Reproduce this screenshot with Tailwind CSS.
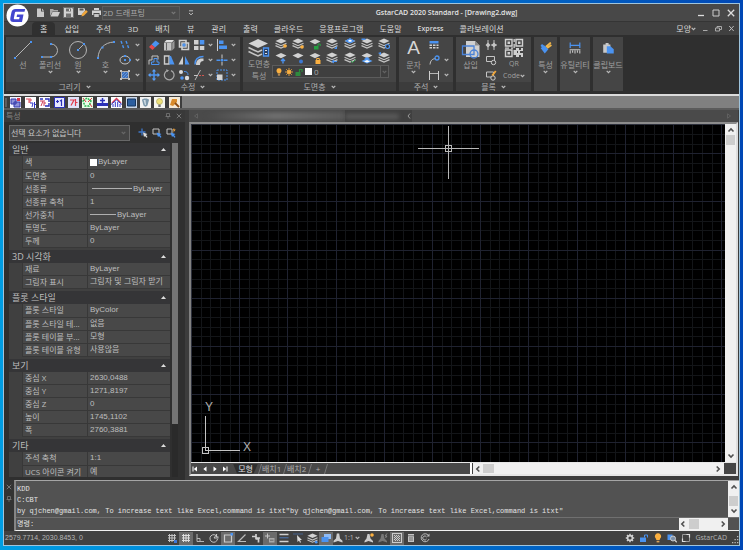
<!DOCTYPE html>
<html lang="ko">

<head>
    <meta charset="UTF-8">
    <meta name="viewport" content="width=device-width, initial-scale=1.0">
    <title>GstarCAD 2020 Standard - [Drawing2.dwg]</title>
    <script src="https://cdn.jsdelivr.net/npm/@tailwindcss/browser@4"></script>
</head>

<body class="h-screen overflow-hidden bg-linear-to-r from-[#009de3] via-[#0078d0] to-[#0047b5] pt-[3px] pr-[3px] pb-1 pl-[3px] font-['Open_Sans','Noto_Sans_CJK_KR',sans-serif] text-[8px] leading-[10px] text-[#c4c4c4]">

    <!-- shared symbols -->
    <svg class="hidden">
        <symbol id="caret" viewBox="0 0 5 4"><path d="M.7.8 2.5 2.6 4.3.8" fill="none" stroke="#bbb" stroke-width="1.2" /></symbol>
        <symbol id="layers" viewBox="0 0 12 12">
            <path d="M6 .5 11.5 3 6 5.5.5 3z" fill="#d2d2d2" />
            <path d="M.5 5.2 6 7.7l5.5-2.5M.5 7.6 6 10.1l5.5-2.5" fill="none" stroke="#c4c4c4" stroke-width="1.2" />
        </symbol>
        <symbol id="layer" viewBox="0 0 12 12">
            <path d="M6 1 11.5 3.6 6 6.2.5 3.6z" fill="#d2d2d2" />
        </symbol>
        <symbol id="up" viewBox="0 0 8 8"><path d="M1.5 5.5 4 3l2.5 2.5" fill="none" stroke="#505050" stroke-width="1.6" /></symbol>
        <symbol id="down" viewBox="0 0 8 8"><path d="M1.5 2.5 4 5l2.5-2.5" fill="none" stroke="#505050" stroke-width="1.6" /></symbol>
        <symbol id="left" viewBox="0 0 8 8"><path d="M5.3 1.5 2.8 4l2.5 2.5" fill="none" stroke="#505050" stroke-width="1.6" /></symbol>
        <symbol id="right" viewBox="0 0 8 8"><path d="M2.7 1.5 5.2 4 2.7 6.5" fill="none" stroke="#505050" stroke-width="1.6" /></symbol>
        <symbol id="bulb" viewBox="0 0 10 10"><path d="M5 .3a3 3 0 0 1 2.2 5.2L6.6 7H3.4L2.8 5.5A3 3 0 0 1 5 .3z" fill="#fbb040" /><path d="M3.6 7.8h2.8v1.6H3.6z" fill="#d9a35a" /></symbol>
    </svg>

    <div class="relative flex h-full flex-col border border-[#9fc4dc] bg-[#3a3a3a]">

        <button aria-label="GstarCAD" class="absolute top-0 left-[2px] z-10 size-[23px]">
            <svg viewBox="0 0 23 23" class="size-[23px]">
                <circle cx="11.5" cy="11.5" r="11" fill="#fff" />
                <path d="M19.2 5H9.8C6.8 5 6 6.200 5.400 8.500L4.400 13.500C3.800 16.500 4.700 18 7.500 18H16l1.500-7.500h-6.400l-.5 2.400h3l-.5 2.300H8.700c-.8 0-1-.4-.8-1.300l.9-4.700c.2-1 .6-1.400 1.500-1.400h8.200z" fill="#4246cf" />
            </svg>
        </button>

        <!-- title bar -->
        <header class="flex h-[17px] shrink-0 items-center bg-[#484848] pr-1 pl-[31px]">
            <div class="flex items-center gap-[3px]">
                <button aria-label="새로 만들기"><svg viewBox="0 0 11 11" class="size-[11px]"><path d="M2 1.500h4v3h3V10H2zM7 1.500 9 3.800H7z" fill="#c9c9c9" /></svg></button>
                <button aria-label="열기"><svg viewBox="0 0 11 11" class="size-[11px]"><path d="M1 9V2h3l1 1h4v1.500H3.500z" fill="#aaa" /><path d="M3.500 5H11L9 9.500H1.500z" fill="#cdcdcd" /></svg></button>
                <button aria-label="저장" class="bg-[#6e6e6e]"><svg viewBox="0 0 11 11" class="size-[11px]"><path d="M1 1h8l1 1v8H1z" fill="#d2d2d2" /><path d="M3 1.500h5v3H3zM3 6.500h5V10H3z" fill="#707070" /><path d="M6 2h1v2H6z" fill="#ddd" /></svg></button>
                <button aria-label="다른 이름으로 저장"><svg viewBox="0 0 11 11" class="size-[11px]"><path d="M1 1h6l1 1v2L4.500 8H1z" fill="#d2d2d2" /><path d="M2.500 1.500h4v2h-4z" fill="#555" /><path d="m5 7 4-4 1.800 1.800-4 4L4.500 9.500z" fill="#f0a63a" /></svg></button>
                <button aria-label="인쇄"><svg viewBox="0 0 11 11" class="size-[11px]"><path d="M3 1h5v2H3zM1 3.500h9V8H8.500V6h-6v2H1z" fill="#d2d2d2" /><path d="M3.200 7h4.600v3H3.200z" fill="#c4c4c4" /></svg></button>
            </div>
            <div class="relative flex">
                <select aria-label="작업 공간" class="h-[14px] w-[78px] appearance-none border border-[#5c5c5c] bg-[#4b4b4b] text-[8px] leading-[12px] text-[#a8a8a8]">
                    <option>2D 드래프팅</option>
                </select>
                <svg viewBox="0 0 5 4" class="pointer-events-none absolute top-[5px] right-1 h-1 w-[5px] opacity-40"><use href="#caret" /></svg>
            </div>
            <button aria-label="빠른 실행 사용자화" class="ml-2"><svg viewBox="0 0 6 6" class="size-[6px]"><path d="M1 .8h4M1 3l2 1.800L5 3" fill="none" stroke="#bbb" /></svg></button>
            <h1 class="flex-1 pl-[76px] text-center text-[7px] font-semibold text-[#e4e4e4]">GstarCAD 2020 Standard - [Drawing2.dwg]</h1>
            <div class="flex w-[112px] justify-end gap-[7px]">
                <button aria-label="최소화"><svg viewBox="0 0 8 8" class="size-2"><path d="M1 6.500h6" stroke="#ddd" stroke-width="1.300" /></svg></button>
                <button aria-label="최대화"><svg viewBox="0 0 8 8" class="size-2"><path d="M1 1h6v6H1z" fill="none" stroke="#ccc" /></svg></button>
                <button aria-label="닫기"><svg viewBox="0 0 8 8" class="size-2"><path d="m.8.8 6.400 6.400m0-6.400L.8 7.200" stroke="#ddd" stroke-width="1.300" /></svg></button>
            </div>
        </header>

        <!-- ribbon tabs -->
        <nav class="flex h-[14px] shrink-0 items-stretch border-t border-[#353535] bg-[#404040] pr-1 pl-7 leading-[13px] text-[#dadada]">
            <div class="flex gap-px">
                <a href="#" class="rounded-t-sm bg-[#303030] px-2">홈</a>
                <a href="#" class="px-2">삽입</a>
                <a href="#" class="px-2">주석</a>
                <a href="#" class="px-2">3D</a>
                <a href="#" class="px-2">배치</a>
                <a href="#" class="px-2">뷰</a>
                <a href="#" class="px-2">관리</a>
                <a href="#" class="px-2">출력</a>
            </div>
            <a href="#" class="px-2">클라우드</a>
            <a href="#" class="px-2">응용프로그램</a>
            <a href="#" class="px-2">도움말</a>
            <a href="#" class="px-2 text-[7px] font-semibold">Express</a>
            <a href="#" class="px-2">콜라보레이션</a>
            <div class="ml-auto flex items-center gap-[6px]">
                <button class="flex items-center">모양<svg class="h-1 w-[5px]"><use href="#caret" /></svg></button>
                <button aria-label="도면 최소화"><svg viewBox="0 0 7 7" class="size-[7px]"><path d="M1 5.500h4.500" stroke="#aaa" /></svg></button>
                <button aria-label="도면 복원"><svg viewBox="0 0 7 7" class="size-[7px]"><path d="M.5 3h4v3h-4zM2 3V1.500h4.500v3h-2" fill="none" stroke="#aaa" /></svg></button>
                <button aria-label="도면 닫기"><svg viewBox="0 0 7 7" class="size-[7px]"><path d="m1.200 1 4.500 5m0-5-4.500 5" stroke="#bbb" /></svg></button>
            </div>
        </nav>

        <!-- ribbon -->
        <section class="flex h-[59px] shrink-0 gap-[3px] bg-[#2f2f2f] px-[2px] pt-[2px] pb-[3px] text-[#a0a0a0]">

            <div class="flex w-[137px] flex-col bg-[#454545]">
                <div class="flex flex-1 pl-1">
                    <button class="flex w-[26px] flex-col items-center pt-[3px]">
                        <svg viewBox="0 0 20 20" class="size-5"><path d="M2 18 18 2" stroke="#b5b5b5" /><path d="M1 17h2v2H1zM17 1h2v2h-2z" fill="#4b93f0" /></svg>선</button>
                    <button class="flex w-7 flex-col items-center pt-[3px]">
                        <svg viewBox="0 0 20 20" class="size-5"><path d="M2 17h9a6.500 6.500 0 0 0 0-13" fill="none" stroke="#b5b5b5" /><path d="M1 16h2v2H1zM10 16h2v2h-2zM10 3h2v2h-2z" fill="#4b93f0" /></svg>폴리선<svg class="h-1 w-[5px]"><use href="#caret" /></svg></button>
                    <button class="flex w-7 flex-col items-center pt-[3px]">
                        <svg viewBox="0 0 20 20" class="size-5"><circle cx="10" cy="10" r="8.500" fill="none" stroke="#b5b5b5" /><path d="m10 10 6-6" stroke="#b5b5b5" /><path d="M9 9h2v2H9zM15 3h2v2h-2z" fill="#4b93f0" /></svg>원<svg class="h-1 w-[5px]"><use href="#caret" /></svg></button>
                    <button class="flex w-[27px] flex-col items-center pt-[3px]">
                        <svg viewBox="0 0 20 20" class="size-5"><path d="M2 18C2.500 9 8 2.500 18 2" fill="none" stroke="#b5b5b5" /><path d="M1 17h2v2H1zM5.500 6.500h2v2h-2zM17 1h2v2h-2z" fill="#4b93f0" /></svg>호<svg class="h-1 w-[5px]"><use href="#caret" /></svg></button>
                    <div class="grid grid-cols-[12px_12px] grid-rows-3 place-items-center">
                        <button aria-label="구성선"><svg viewBox="0 0 12 12" class="size-3"><path d="m2 2 3 8m2-8 3 8" stroke="#4b93f0" stroke-dasharray="3 1.500" stroke-width="1.400" /></svg></button>
                        <svg class="h-1 w-[5px]"><use href="#caret" /></svg>
                        <button aria-label="타원"><svg viewBox="0 0 12 12" class="size-3"><ellipse cx="6" cy="6" rx="5" ry="4" fill="none" stroke="#c4c4c4" /><path d="M5 5h2v2H5zM5 1h2v2H5zM10 5h2v2h-2z" fill="#4b93f0" /></svg></button>
                        <svg class="h-1 w-[5px]"><use href="#caret" /></svg>
                        <button aria-label="해치"><svg viewBox="0 0 12 12" class="size-3"><path d="M2.500 2.500h7v7h-7z" fill="#4170b8" stroke="#b0b0b0" /><path d="M1 1h2v2H1zM9 1h2v2H9zM1 9h2v2H1zM9 9h2v2H9z" fill="#c4c4c4" /><path d="m3 6 3-3M3 9l6-6M6 9l3-3" stroke="#6fa8f0" stroke-width=".7" /></svg></button>
                        <svg class="h-1 w-[5px]"><use href="#caret" /></svg>
                    </div>
                </div>
                <button class="flex h-[9px] items-center justify-center gap-[5px] bg-[#3c3c3c] text-[#b0b0b0]">그리기<svg class="h-1 w-[5px]"><use href="#caret" /></svg></button>
            </div>

            <div class="flex w-[94px] flex-col bg-[#454545]">
                <div class="grid flex-1 grid-cols-[15px_15px_15px_15px_9px_14px_8px] grid-rows-3 place-items-center">
                    <button aria-label="지우기"><svg viewBox="0 0 12 12" class="size-3"><path d="m3.500 5.500 4-4 4 3-4.500 4z" fill="#4b93f0" /><path d="m3.500 5.500 3.500 3L4.500 11 1 8z" fill="#e5484d" /></svg></button>
                    <button aria-label="복사 3D"><svg viewBox="0 0 12 12" class="size-3"><path d="M1 3.500 3.500 1H11L9 3.500z" fill="#e0e0e0" /><path d="M1 4h7.500v7.500H1z" fill="#c4c4c4" /><path d="m9.200 4 2.300-2.500V9l-2.300 2.500z" fill="#999" /><path d="M3.500 4v7" stroke="#666" /></svg></button>
                    <button aria-label="복사"><svg viewBox="0 0 12 12" class="size-3"><path d="M1.500 1.500h6.500v6.500H1.500zM4 4h6.500v6.500H4z" fill="none" stroke="#d0d0d0" stroke-width="1.600" /><path d="M4.500 4.500h3v3h-3z" fill="#4b93f0" /></svg></button>
                    <button aria-label="배열"><svg viewBox="0 0 12 12" class="size-3"><path d="M1 1h4.500v4.500H1z" fill="#d0d0d0" /><path d="M6.800 1h4.500v4.500H6.800z" fill="#4b93f0" /><path d="M1 7h4.500v4H1zM6.800 7h4.500v4H6.800z" fill="#d0d0d0" /></svg></button>
                    <svg class="h-1 w-[5px]"><use href="#caret" /></svg>
                    <button aria-label="정렬"><svg viewBox="0 0 12 12" class="size-3"><path d="M1.500 0v12" stroke="#ccc" /><path d="M3 1.500h4.500V5H3zM3 6.500h8V10H3z" fill="#4b93f0" /></svg></button>
                    <svg class="h-1 w-[5px]"><use href="#caret" /></svg>

                    <button aria-label="간격띄우기"><svg viewBox="0 0 12 12" class="size-3"><path d="M1 10.500V6h3V2h6v3.500" fill="none" stroke="#c4c4c4" /><path d="M3.500 10.500V8H6V4.500h3V8h2v2.500z" fill="none" stroke="#4b93f0" /></svg></button>
                    <button aria-label="신축"><svg viewBox="0 0 12 12" class="size-3"><path d="M1.500 2h4.500v8H1.500z" fill="none" stroke="#ccc" stroke-width="1.400" /><path d="M6.500 2h1.500l3.500 8.500H6.500z" fill="#4b93f0" /></svg></button>
                    <button aria-label="대칭"><svg viewBox="0 0 12 12" class="size-3"><path d="M5 2v8.500H.5z" fill="#d0d0d0" /><path d="M7 2v8.500h4.500z" fill="#4b93f0" /></svg></button>
                    <button aria-label="모깎기"><svg viewBox="0 0 12 12" class="size-3"><path d="M2 10.500C2 5 5 2.500 10.500 2.500" fill="none" stroke="#4b93f0" stroke-width="1.400" /><path d="M3 11c0-4 2-6.500 6-6.500h1.500V7C8 7 7 8.500 7 11z" fill="#d0d0d0" /></svg></button>
                    <svg class="h-1 w-[5px]"><use href="#caret" /></svg>
                    <button aria-label="분해"><svg viewBox="0 0 12 12" class="size-3"><path d="M6 .5v4M6 8v3.500" stroke="#ccc" /><path d="M.5 6.200h4m3 0h4" stroke="#4b93f0" stroke-width="1.400" /><path d="M5 5h2v2.500H5z" fill="#4b93f0" /></svg></button>
                    <svg class="h-1 w-[5px]"><use href="#caret" /></svg>

                    <button aria-label="이동"><svg viewBox="0 0 12 12" class="size-3"><path d="M6 1v10M1 6h10" stroke="#4b93f0" stroke-width="1.500" /><path d="m6 0 2.200 2.500H3.800zM6 12l2.200-2.500H3.800zM0 6l2.500-2.200v4.400zM12 6 9.500 3.800v4.400z" fill="#5b9ff5" /></svg></button>
                    <button aria-label="회전"><svg viewBox="0 0 12 12" class="size-3"><path d="M8 1.600A4.800 4.800 0 1 1 4 1.800" fill="none" stroke="#a8a8a8" stroke-width="1.200" /><path d="m3 .3 3 1-2 2z" fill="#a8a8a8" /></svg></button>
                    <button aria-label="객체 복사"><svg viewBox="0 0 12 12" class="size-3"><circle cx="3" cy="3" r="2" fill="#ddd" /><path d="M6 2.500c3 0 4 1 4 3.500" fill="none" stroke="#4b93f0" /><circle cx="4" cy="9" r="1.800" fill="#4b93f0" /><circle cx="9" cy="9" r="2.200" fill="#ddd" /></svg></button>
                    <button aria-label="자르기"><svg viewBox="0 0 12 12" class="size-3"><path d="M2 11 7.500 1" stroke="#b5b5b5" /><path d="M1 6.500h4" stroke="#c4c4c4" /><path d="M6 6.500h5.500" stroke="#d0574f" stroke-dasharray="2 1" /></svg></button>
                    <svg class="h-1 w-[5px]"><use href="#caret" /></svg>
                    <button aria-label="축척"><svg viewBox="0 0 12 12" class="size-3"><path d="M1 1h10v10H1z" fill="none" stroke="#4b93f0" stroke-dasharray="2 1" /><path d="M1 5.500h5.500V11H1z" fill="#d5d5d5" /></svg></button>
                    <svg class="h-1 w-[5px]"><use href="#caret" /></svg>
                </div>
                <button class="flex h-[9px] items-center justify-center gap-[5px] bg-[#3c3c3c] text-[#b0b0b0]">수정<svg class="h-1 w-[5px]"><use href="#caret" /></svg></button>
            </div>

            <div class="flex w-[153px] flex-col bg-[#454545]">
                <div class="flex flex-1">
                    <button class="flex w-7 flex-col items-center pt-px pl-1 leading-[12px]">
                        <svg viewBox="0 0 22 20" class="h-5 w-[22px]"><path d="M10 1 20 5.500 10 10 .5 5.500z" fill="#d5d5d5" /><path d="m.5 9.500 9.500 4.500 4-2M.5 13.500 10 18l4-2" fill="none" stroke="#c4c4c4" stroke-width="1.500" /><path d="M15.500 10h5v8h-5z" fill="#263d63" stroke="#4b93f0" stroke-width="1.300" /><path d="M17 12.500h2m-2 3h2" stroke="#ddd" /></svg>
                        <span>도면층</span><span>특성</span></button>
                    <div class="flex flex-1 flex-col pl-[1px]">
                        <div class="grid grid-cols-7 place-items-center gap-y-[2px] pt-px pr-[3px]">
                            <button aria-label="도면층 끄기"><svg viewBox="0 0 12 12" class="size-3"><use href="#layers" /><circle cx="10" cy="8" r="1.800" fill="#fbb040" /></svg></button>
                            <button aria-label="도면층 동결"><svg viewBox="0 0 12 12" class="size-3"><use href="#layers" /><circle cx="10" cy="9" r="1.800" fill="#fbb040" /></svg></button>
                            <button aria-label="도면층 잠금 해제"><svg viewBox="0 0 12 12" class="size-3"><use href="#layer" /><path d="M5 8h4.500v3.500H5z" fill="#26a042" /><path d="M9 8V6h2.200v2" fill="none" stroke="#26a042" /></svg></button>
                            <button aria-label="도면층 일치"><svg viewBox="0 0 12 12" class="size-3"><use href="#layers" /><path d="m8 11 3-3v3z" fill="#4b93f0" /></svg></button>
                            <button aria-label="현재로 설정"><svg viewBox="0 0 12 12" class="size-3"><use href="#layers" /><path d="M6 0 11 3 6 5.500 1 3z" fill="#3f8cf0" /><path d="M6 1.500 8.500 3 6 4 3.500 3z" fill="#fff" /></svg></button>
                            <button aria-label="도면층 이전"><svg viewBox="0 0 12 12" class="size-3"><use href="#layers" /><path d="M.5.500h4v1.500h-4z" fill="#4b93f0" /></svg></button>
                            <button aria-label="도면층 상태"><svg viewBox="0 0 12 12" class="size-3"><use href="#layers" /><circle cx="9.500" cy="8.500" r="2" fill="#343434" stroke="#4b93f0" stroke-width="1.200" /></svg></button>
                            <button aria-label="도면층 켜기"><svg viewBox="0 0 12 12" class="size-3"><use href="#layer" /><path d="M8 11.500V7M6 9l2-2 2 2" fill="none" stroke="#4b93f0" stroke-width="1.400" /></svg></button>
                            <button aria-label="도면층 동결 해제"><svg viewBox="0 0 12 12" class="size-3"><use href="#layer" /><circle cx="9" cy="9.500" r="2" fill="#3d78d0" /></svg></button>
                            <button aria-label="도면층 잠금"><svg viewBox="0 0 12 12" class="size-3"><use href="#layer" /><path d="M6.500 8h5v4h-5z" fill="#fbb040" /><path d="M7.700 8V6.500h2.600V8" fill="none" stroke="#fbb040" /></svg></button>
                            <button aria-label="현재 도면층으로"><svg viewBox="0 0 12 12" class="size-3"><use href="#layers" /><path d="m5.500 9.500 2.500-2v4z" fill="#4b93f0" /><path d="M7 9.500h4" stroke="#4b93f0" /></svg></button>
                            <button aria-label="도면층 검토"><svg viewBox="0 0 12 12" class="size-3"><use href="#layers" /><path d="m7 9 1.500 1.500L11.500 7.500" fill="none" stroke="#33a852" /></svg></button>
                            <button aria-label="도면층 병합"><svg viewBox="0 0 12 12" class="size-3"><use href="#layer" /><path d="m6 5 3 2-3 1.500L3 7z" fill="#4b93f0" /><path d="M6 6.500 11.500 9 6 11.500.5 9z" fill="#5aa0f7" /><path d="M6 8 9 9.500l-3 1-3-1z" fill="#fff" /></svg></button>
                            <button aria-label="도면층 분리"><svg viewBox="0 0 12 12" class="size-3"><use href="#layers" /><path d="m0 1 3-1v3z" fill="#4b93f0" /></svg></button>
                        </div>
                        <div class="relative mt-px mr-[7px] flex h-[13px] items-center gap-[2px] border border-[#5c5c5c] bg-[#3f3f3f] pl-[2px]">
                            <svg viewBox="0 0 10 10" class="h-2 w-2"><use href="#bulb" /></svg>
                            <svg viewBox="0 0 10 10" class="h-2 w-2"><path d="M5 0v10M0 5h10M1.500 1.500l7 7m0-7-7 7" stroke="#fbb040" /><circle cx="5" cy="5" r="2.500" fill="#fbb040" /></svg>
                            <svg viewBox="0 0 8 8" class="h-2 w-2"><path d="M.5 4h5v4h-5z" fill="#2e8b3e" /><path d="M4.500 4V1.500h2.500V4" fill="none" stroke="#2e8b3e" stroke-width="1.200" /></svg>
                            <span class="size-[7px] bg-white"></span>
                            <select aria-label="현재 도면층" class="h-[11px] flex-1 appearance-none text-[8px] leading-[10px] text-[#a8a8a8]">
                                <option>0</option>
                            </select>
                            <span class="pointer-events-none absolute top-0 right-0 flex h-[11px] w-2 items-center justify-center border-l border-[#5c5c5c]"><svg class="h-1 w-[5px] opacity-30"><use href="#caret" /></svg></span>
                        </div>
                    </div>
                </div>
                <button class="flex h-[9px] items-center justify-center gap-[5px] bg-[#3c3c3c] text-[#b0b0b0]">도면층<svg class="h-1 w-[5px]"><use href="#caret" /></svg></button>
            </div>

            <div class="flex w-[54px] flex-col bg-[#454545]">
                <div class="flex flex-1">
                    <button class="flex w-[29px] flex-col items-center pt-px">
                        <span class="h-[22px] font-['Liberation_Sans',sans-serif] text-[19px] leading-5 text-[#d5d5d5]">A</span>문자<svg class="h-1 w-[5px]"><use href="#caret" /></svg></button>
                    <div class="grid grid-cols-[12px_12px] grid-rows-3 place-items-center">
                        <button aria-label="표" class="col-start-1"><svg viewBox="0 0 12 12" class="size-3"><path d="M1.500 2h9v2.500h-9z" fill="#4b93f0" /><path d="M1.500 5.500h2.500v1.500H1.500zM5 5.500h2.500v1.500H5zM8.500 5.500h2v1.500h-2zM1.500 8h2.500v1.500H1.500zM5 8h2.500v1.500H5zM8.500 8h2v1.500h-2z" fill="#d0d0d0" /></svg></button>
                        <button aria-label="지시선" class="col-start-1"><svg viewBox="0 0 12 12" class="size-3"><path d="M2 10.500C2.500 6.500 4 5 7.500 4.500" fill="none" stroke="#c4c4c4" /><circle cx="9" cy="4" r="2" fill="none" stroke="#4b93f0" stroke-width="1.300" /></svg></button>
                        <svg class="h-1 w-[5px]"><use href="#caret" /></svg>
                        <button aria-label="치수"><svg viewBox="0 0 12 12" class="size-3"><path d="M1.500 2v9m9-9v9" stroke="#d0d0d0" /><path d="M2 4.500h8" stroke="#b5b5b5" /></svg></button>
                        <svg class="h-1 w-[5px]"><use href="#caret" /></svg>
                    </div>
                </div>
                <button class="flex h-[9px] items-center justify-center gap-[5px] bg-[#3c3c3c] text-[#b0b0b0]">주석<svg class="h-1 w-[5px]"><use href="#caret" /></svg></button>
            </div>

            <div class="flex w-[75px] flex-col bg-[#454545]">
                <div class="flex flex-1">
                    <button class="flex w-[29px] flex-col items-center pt-[3px]">
                        <svg viewBox="0 0 20 20" class="size-5"><path d="M5 1h9l4.500 4.500V17H5z" fill="#d0d0d0" /><path d="M14 1v4.500h4.500z" fill="#8d8d8d" /><path d="M1.500 6h11.500v8.500H1.500z" fill="none" stroke="#4b83d8" stroke-width="1.300" /><circle cx="13" cy="14" r="4" fill="none" stroke="#4b83d8" stroke-width="1.300" /></svg>삽입</button>
                    <div class="grid w-3 grid-rows-3 place-items-center">
                        <button aria-label="블록 작성"><svg viewBox="0 0 12 12" class="size-3"><path d="M3 1v10M9 1v10M6 6h6" stroke="#c4c4c4" /><path d="m3 3.500 2.500 2.500L3 8.500.5 6zM9 3.500 11.500 6 9 8.500 6.500 6z" fill="#c4c4c4" /></svg></button>
                        <button aria-label="블록 편집"><svg viewBox="0 0 12 12" class="size-3"><path d="M1.500 2.500h8v5h-8z" fill="none" stroke="#c4c4c4" /><circle cx="8.500" cy="8.500" r="2.200" fill="#454545" stroke="#d0d0d0" /></svg></button>
                        <button aria-label="속성 편집"><svg viewBox="0 0 12 12" class="size-3"><path d="M1.500 3h7v5h-7z" fill="none" stroke="#c4c4c4" /><circle cx="8" cy="9" r="2.200" fill="#454545" stroke="#d0d0d0" /><path d="m6.500 6 3.500-4.500 1.500 1L8 7z" fill="#f0a63a" /></svg></button>
                    </div>
                    <button class="flex w-[34px] flex-col items-center pt-px leading-[12px]">
                        <svg viewBox="0 0 20 20" class="size-5"><path d="M1.500 1.500h6.500v6.500H1.500zM12 1.500h6.500v6.500H12zM1.500 12h6.500v6.500H1.500z" fill="none" stroke="#d0d0d0" stroke-width="1.400" /><path d="M3.500 3.500h2.500v2.500H3.500zM14 3.500h2.500v2.500H14zM3.500 14h2.500v2.500H3.500zM9.500 1h1.300v3H9.500zM9.500 6h1.300v4H9.500zM1 9.500h4v1.300H1zM7 9.500h2v1.300H7zM12 10h3v2h2v-2h2v3h-3v2h3v4h-2v-2h-2v2h-3v-2H9.500v-5H12zM13 13v2h1v-2z" fill="#d0d0d0" /></svg>
                        <span class="text-[7px]">QR</span><span class="flex items-center text-[7px]">Code<svg class="h-1 w-[5px]"><use href="#caret" /></svg></span></button>
                </div>
                <button class="flex h-[9px] items-center justify-center gap-[5px] bg-[#3c3c3c] text-[#b0b0b0]">블록<svg class="h-1 w-[5px]"><use href="#caret" /></svg></button>
            </div>

            <button class="flex w-[23px] flex-col items-center bg-[#454545] pt-1">
                <svg viewBox="0 0 10 10" class="mt-px mb-[6px] size-3"><path d="m4 3 3 3-3 3.500L.5 5z" fill="#4b93f0" /><path d="M1 2.500 3 4" stroke="#4b93f0" stroke-width="2" /><path d="m5 4 4-3.500M6 5l3.500-2.500" stroke="#f2b84b" stroke-width="1.500" /></svg>특성<svg class="h-1 w-[5px]"><use href="#caret" /></svg></button>
            <button class="flex w-[30px] flex-col items-center bg-[#454545] pt-1">
                <svg viewBox="0 0 10 10" class="mt-px mb-[6px] size-3"><path d="M1 .5v4.500M9 .5v4.500M1 2.800h8" stroke="#4b93f0" /><path d="M.5 6.500h9M1 7v2.500M3 7v2M5 7v2.500M7 7v2M9 7v2.500" stroke="#c4c4c4" stroke-width=".9" /></svg>유틸리티<svg class="h-1 w-[5px]"><use href="#caret" /></svg></button>
            <button class="flex w-[30px] flex-col items-center bg-[#454545] pt-1">
                <svg viewBox="0 0 10 10" class="mt-px mb-[6px] size-3"><path d="M1 2h2V.8h2.500V2H7v7H1z" fill="#c8c8c8" /><path d="M4 3.500h3L9.800 6v3.500H4z" fill="#4b93f0" /></svg>클립보드<svg class="h-1 w-[5px]"><use href="#caret" /></svg></button>
        </section>

        <!-- express toolbar -->
        <div class="flex h-4 shrink-0 border-t-2 border-b-2 border-t-[#dcdcdc] border-b-[#5b5b5b] bg-[#808080]">
            <div class="flex w-[178px] items-center justify-between bg-[#3d3d3d] pr-[2px] pl-px">
                <span class="h-[9px] w-[2px] bg-[#5f5f5f]"></span>
                <button aria-label="문자 저장"><svg viewBox="0 0 11 11" class="size-[11px]"><path fill="#f4f4ff" d="M0 0h11v11H0z" /><path d="M1 2h5v5H1zM4 5h6v5H4z" fill="#8d91d8" stroke="#3036a8" /><path d="M7 1h3v3H7z" fill="#d8344a" /></svg></button>
                <button aria-label="문자 변환"><svg viewBox="0 0 11 11" class="size-[11px]"><path fill="#fff" d="M0 0h11v11H0z" /><path d="M1 2h3v4M5 1v5M5 3h2" fill="none" stroke="#e04a5a" /><path d="M5 6h3l-1 4M9.500 5v6M9.500 7.500H11" fill="none" stroke="#3339c8" /></svg></button>
                <button aria-label="문자 교환"><svg viewBox="0 0 11 11" class="size-[11px]"><path fill="#fff" d="M0 0h11v11H0z" /><path d="M1 4h3L2 9M5 3v6M5 6h2" fill="none" stroke="#d04058" /><path d="M6 2h4v3M6 9h4V6M1 2h3" fill="none" stroke="#2a30b8" stroke-width="1.400" /></svg></button>
                <button aria-label="번호 증가"><svg viewBox="0 0 11 11" class="size-[11px]"><path fill="#e6e8ff" stroke="#2a30b8" d="M.5.500h10v10H.5z" /><path d="M2 4.500h3M3.500 3v3M6 4l1.500-1v6" fill="none" stroke="#2a30b8" stroke-width="1.200" /></svg></button>
                <button aria-label="문자 수정"><svg viewBox="0 0 11 11" class="size-[11px]"><path fill="#dfe2f8" d="M0 0h11v11H0z" /><path d="M2 3h4L3 8.500M7.500 2v7M7.500 5.500h2" fill="none" stroke="#e03a4a" stroke-width="1.200" /></svg></button>
                <button aria-label="영역"><svg viewBox="0 0 11 11" class="size-[11px]"><path fill="#e8ffe8" d="M0 0h11v11H0z" /><path d="M1 4 5 1l4 3-2 5H3z" fill="none" stroke="#22b14c" stroke-width="1.400" stroke-dasharray="2 1" /><path d="m1 1 3 4m2 0 4-4M8 7l2 3" stroke="#e03a4a" /></svg></button>
                <button aria-label="삽입점"><svg viewBox="0 0 11 11" class="size-[11px]"><path fill="#f0f2ff" d="M0 0h11v11H0z" /><path d="M0 6h11v3H0z" fill="#2a30b8" /><path d="M3 3.500h5M5.500 1v5" stroke="#2a30b8" stroke-width="1.500" /></svg></button>
                <button aria-label="지붕"><svg viewBox="0 0 11 11" class="size-[11px]"><path fill="#fff" d="M0 0h11v11H0z" /><path d="m1 6 4.500-4.500L10 6" fill="none" stroke="#e03a4a" stroke-width="1.300" /><path d="M2 10V7m2.300 3V5m2.400 5V5M9 10V7M0 7.500 5.500 3 11 7.500" fill="none" stroke="#3339c8" /></svg></button>
                <button aria-label="창"><svg viewBox="0 0 11 11" class="size-[11px]"><path fill="#c9d6e8" d="M0 0h11v11H0z" /><path d="M1.500 2h8v7h-8z" fill="#2c5e9e" stroke="#16365f" /></svg></button>
                <button aria-label="필터"><svg viewBox="0 0 11 11" class="size-[11px]"><path fill="#f2f2f2" d="M0 0h11v11H0z" /><path d="M2 3c0-2 7-2 7 0L7.500 8.500c-1 1.500-3 1.500-4 0z" fill="#7d99ad" /><path d="M3.500 3h2l.5 5H5z" fill="#cfdde6" /></svg></button>
                <button aria-label="전구"><svg viewBox="0 0 11 11" class="size-[11px]"><path fill="#f7f7f0" d="M0 0h11v11H0z" /><circle cx="5.500" cy="4.500" r="3" fill="#efe27a" stroke="#b0a860" stroke-width=".7" /><path d="M4.300 7.500h2.400V10H4.300z" fill="#777" /></svg></button>
                <button aria-label="브러시"><svg viewBox="0 0 11 11" class="size-[11px]"><path fill="#f5ead8" d="M0 0h11v11H0z" /><path d="M3 2h5v3L4 9 1 8z" fill="#d98b2b" /><path d="m6 6 4 4" stroke="#8a4a10" stroke-width="1.800" /></svg></button>
            </div>
        </div>

        <main class="flex min-h-0 flex-1 bg-[#3c3c3c]">

            <!-- property palette -->
            <aside class="flex w-[181px] shrink-0 flex-col bg-[#2f2f2f] pb-[3px] text-[#bebebe]">
                <div class="flex h-3 shrink-0 items-center gap-[5px] bg-[#393939] pr-[3px] pl-[2px] text-[#858585]">
                    <h2 class="mr-auto text-[8px]">특성</h2>
                    <button aria-label="고정"><svg viewBox="0 0 6 6" class="size-[6px]"><path d="M1.500.5h3v3h-3zM.5 3.500h5M3 3.500v2.300" fill="none" stroke="#777" stroke-width=".8" /></svg></button>
                    <button aria-label="특성 닫기"><svg viewBox="0 0 6 6" class="size-[6px]"><path d="m.8.8 4.400 4.400m0-4.400L.8 5.200" stroke="#777" /></svg></button>
                </div>
                <div class="flex shrink-0 items-center px-[5px] pt-[3px]">
                    <div class="relative flex">
                        <select aria-label="선택 요소" class="h-4 w-[121px] appearance-none border border-[#686868] bg-[#454545] px-px text-[8px] leading-[12px] text-[#c4c4c4]">
                            <option>선택 요소가 없습니다</option>
                        </select>
                        <svg class="pointer-events-none absolute top-[6px] right-1 h-1 w-[5px] opacity-30"><use href="#caret" /></svg>
                    </div>
                    <div class="ml-2 flex gap-1">
                        <button aria-label="빠른 선택"><svg viewBox="0 0 10 10" class="size-[10px]"><path d="M4 .5v7M.5 4h7" stroke="#3f77c8" stroke-width="1.300" /><path d="m5 4.500 4.500 1.500-1.500 1L9.500 9l-1 .8L7 8 6 9z" fill="#ddd" /></svg></button>
                        <button aria-label="객체 선택"><svg viewBox="0 0 10 10" class="size-[10px]"><path d="M1 1h6v5H1z" fill="none" stroke="#c4c4c4" /><path d="M4.500 4.500 9.500 6 8 7l1.500 2-1 .8L7 8 6 9z" fill="#4b93f0" /></svg></button>
                        <button aria-label="신속 선택"><svg viewBox="0 0 10 10" class="size-[10px]"><path d="M1 1h5v5H1z" fill="none" stroke="#c4c4c4" /><path d="M4.500 4.500 9.500 6 8 7l1.500 2-1 .8L7 8 6 9z" fill="#4b93f0" /><path d="M8 0 6.500 2.500H8L7 5l2.800-3.500H8.500z" fill="#f2a33a" /></svg></button>
                    </div>
                </div>
                <div class="mt-[2px] flex min-h-0 flex-1 gap-[2px] pl-[5px]">
                    <div id="properties" class="w-[161px] overflow-hidden bg-[#404040]"></div>
                    <div class="w-[6px] bg-[#2a2a2a]"><div class="h-[84%] bg-[#747474]"></div></div>
                </div>
            </aside>

            <!-- drawing -->
            <div class="flex min-w-0 flex-1 flex-col bg-[#3c3c3c] pr-px pb-1 pl-1">
                <div class="flex h-3 shrink-0 items-center overflow-hidden bg-[#4a4a4a] pl-1">
                    <button aria-label="이전 도면"><svg viewBox="0 0 6 6" class="size-[6px]"><path d="M4.500.8v4.400L1.500 3z" fill="none" stroke="#666" stroke-width=".8" /></svg></button>
                    <div class="ml-2 h-2 w-[138px] rounded-full bg-linear-to-r from-[#4a4a4a] via-[#707070] to-[#5c5c5c] blur-[2px]"></div>
                    <div class="flex h-3 flex-1 items-center">
                        <div class="relative flex h-3 w-[67px] items-center bg-[#404040]">
                            <div class="h-[5px] w-[54px] rounded-full bg-[#5c5c5c] blur-[2px]"></div>
                            <button aria-label="도면 탭 닫기" class="ml-auto"><svg viewBox="0 0 6 8" class="h-2 w-[6px]"><path d="M4 1.500 2 4l2 2.500" fill="none" stroke="#999" /></svg></button>
                        </div>
                    </div>
                    <button aria-label="다음 도면" class="mr-[6px]"><svg viewBox="0 0 6 6" class="size-[6px]"><path d="M1.500.8v4.400l3-2.200z" fill="none" stroke="#666" stroke-width=".8" /></svg></button>
                </div>

                <div class="flex min-h-0 flex-1 flex-col border-2 border-t-[#8c8c8c] border-r-[#dedede] border-b-[#e6e6e6] border-l-[#808080]">
                    <div class="flex min-h-0 flex-1">
                        <div class="relative min-w-0 flex-1 overflow-hidden border-t border-l border-[#2c2f3a] bg-black">
                            <svg class="absolute inset-0 size-full" shape-rendering="crispEdges" fill="none">
                                <path id="minor" stroke="#131518" />
                                <path id="major" stroke="#1f2230" />
                            </svg>
                            <svg viewBox="0 0 62 54" class="absolute top-px left-[226px] h-[54px] w-[62px]" shape-rendering="crispEdges"><path d="M0 22.500h61M30.500 0v53M27.500 19.500h6v6h-6z" fill="none" stroke="#b8b8b8" /></svg>
                            <svg viewBox="0 0 52 54" class="absolute bottom-[7px] left-[10px] h-[54px] w-[52px] font-['Liberation_Sans',sans-serif] text-[12px]">
                                <path d="M.5 46.500h6v6h-6zM3.500 15v35M4 49.500h34" fill="none" stroke="#c4c4c4" shape-rendering="crispEdges" />
                                <text x="3" y="10" fill="#b0b0b0">Y</text>
                                <text x="41" y="50" fill="#b0b0b0">X</text>
                            </svg>
                        </div>
                        <div class="flex w-[11px] flex-col items-center bg-[#f0f0f0] py-[2px]">
                            <button aria-label="위로" class="flex"><svg class="size-2"><use href="#up" /></svg></button>
                            <div class="mt-px h-[10px] w-[9px] bg-[#cdcdcd]"></div>
                            <button aria-label="아래로" class="mt-auto flex"><svg class="size-2"><use href="#down" /></svg></button>
                        </div>
                    </div>

                    <div class="flex h-3 shrink-0 items-stretch border-t border-[#e6e6e6] bg-[#484848]">
                        <div class="flex w-[279px] items-center overflow-hidden">
                            <div class="flex w-[42px] items-center gap-1 pl-px">
                                <button aria-label="처음"><svg viewBox="0 0 6 6" class="size-[6px]"><path d="M1 .5v5" stroke="#fff" /><path d="M5 .5v5L1.800 3z" fill="#fff" /></svg></button>
                                <button aria-label="이전"><svg viewBox="0 0 6 6" class="size-[6px]"><path d="M4.500.5v5L1.300 3z" fill="#fff" /></svg></button>
                                <button aria-label="다음"><svg viewBox="0 0 6 6" class="size-[6px]"><path d="M1.500.5v5L4.700 3z" fill="#fff" /></svg></button>
                                <button aria-label="마지막"><svg viewBox="0 0 6 6" class="size-[6px]"><path d="M5 .5v5" stroke="#fff" /><path d="M1 .5v5L4.200 3z" fill="#fff" /></svg></button>
                            </div>
                            <div class="flex leading-[10px] text-[#b0b0b0]">
                                <button class="h-[10px] w-[25px] bg-[#2e2e2e] text-[#e0e0e0] [clip-path:polygon(0_0,100%_0,82%_100%,16%_100%)]">모형</button>
                                <button class="flex w-[25px]"><svg viewBox="0 0 4 10" class="h-[10px] w-1"><path d="M.5 10 3.500 0" stroke="#777" /></svg>배치1</button>
                                <button class="flex w-[25px]"><svg viewBox="0 0 4 10" class="h-[10px] w-1"><path d="M.5 10 3.500 0" stroke="#777" /></svg>배치2</button>
                                <button class="flex w-[20px] justify-between"><svg viewBox="0 0 4 10" class="h-[10px] w-1"><path d="M.5 10 3.500 0" stroke="#777" /></svg>+<svg viewBox="0 0 4 10" class="h-[10px] w-1"><path d="M.5 10 3.500 0" stroke="#777" /></svg></button>
                            </div>
                        </div>
                        <div class="flex flex-1 items-center border-l-2 border-white bg-[#f0f0f0] pr-[2px]">
                            <span class="h-full w-px bg-[#404040]"></span>
                            <button aria-label="왼쪽" class="ml-px flex"><svg class="size-2"><use href="#left" /></svg></button>
                            <div class="ml-px h-[9px] w-[11px] bg-[#cdcdcd]"></div>
                            <button aria-label="오른쪽" class="ml-auto flex"><svg class="size-2"><use href="#right" /></svg></button>
                        </div>
                        <div class="w-[12px] bg-[#454545]"></div>
                    </div>
                </div>
            </div>
        </main>

        <!-- command line -->
        <section class="flex h-[51px] shrink-0 bg-[#333]">
            <div class="flex w-[10px] flex-col items-center gap-[6px] pt-1">
                <button aria-label="명령행 닫기" class="flex"><svg viewBox="0 0 6 6" class="size-[6px]"><path d="m.8.8 4.400 4.400m0-4.400L.8 5.200" stroke="#777" /></svg></button>
                <button aria-label="명령행 고정" class="flex"><svg viewBox="0 0 6 6" class="size-[6px]"><path d="M1.500.5h3v3h-3zM.5 3.500h5M3 3.500v2.300" fill="none" stroke="#777" stroke-width=".8" /></svg></button>
            </div>
            <div class="flex min-w-0 flex-1 flex-col border-t border-b border-l-2 border-t-[#a5a5a5] border-b-[#f0f0f0] border-l-[#858585] bg-[#525252] font-['Liberation_Mono','Noto_Sans_CJK_KR',monospace] text-[7px] text-[#e4e4e4]">
                <div class="flex h-[37px] border-b border-[#707070]">
                    <div class="flex-1 pt-[3px] pl-px leading-[11px] whitespace-nowrap">
                        <p>KDD</p>
                        <p>C:CBT</p>
                        <p>by qjchen@gmail.com, To increase text like Excel,command is itxt"by qjchen@gmail.com, To increase text like Excel,command is itxt"</p>
                    </div>
                    <div class="flex w-[11px] flex-col items-center bg-[#f0f0f0] py-[2px]">
                        <button aria-label="기록 위로" class="flex"><svg class="size-2"><use href="#up" /></svg></button>
                        <div class="mt-[5px] h-[10px] w-[9px] bg-[#cdcdcd]"></div>
                        <button aria-label="기록 아래로" class="mt-auto flex"><svg class="size-2"><use href="#down" /></svg></button>
                    </div>
                </div>
                <div class="flex flex-1 items-stretch pl-px">
                    <label for="command" class="leading-[12px]">명령:</label>
                    <input id="command" type="text" class="min-w-0 flex-1 pl-1 outline-none">
                    <div class="flex w-[49px] items-center bg-[#f0f0f0]">
                        <button aria-label="명령 왼쪽" class="flex"><svg class="size-2"><use href="#left" /></svg></button>
                        <div class="ml-[2px] h-[10px] w-[10px] bg-[#cdcdcd]"></div>
                        <button aria-label="명령 오른쪽" class="mr-px ml-auto flex"><svg class="size-2"><use href="#right" /></svg></button>
                    </div>
                    <div class="w-[11px]"></div>
                </div>
            </div>
        </section>

        <!-- status bar -->
        <footer class="flex h-[14px] shrink-0 items-center bg-[#414141] pl-px text-[7px] text-[#b5b5b5]">
            <span class="w-[160px] font-['Liberation_Sans',sans-serif]">2579.7714, 2030.8453, 0</span>
            <div class="flex items-center">
                <button aria-label="스냅" class="flex h-[13px] w-[14px] items-center justify-center"><svg viewBox="0 0 10 10" class="size-[10px]"><path d="M2.500 1v8M5 1v8M7.500 1v8M1 2.500h8M1 5h8M1 7.500h8" stroke="#c4c4c4" /><path d="M7 7h3v3H7z" fill="#3f77d8" /></svg></button>
                <button aria-label="그리드" class="flex h-[13px] w-[14px] items-center justify-center bg-[#6b6b6b]"><svg viewBox="0 0 10 10" class="size-[10px]"><path d="M2.500 1v8M5 1v8M7.500 1v8M1 2.500h8M1 5h8M1 7.500h8" stroke="#ddd" /></svg></button>
                <button aria-label="직교" class="flex h-[13px] w-[14px] items-center justify-center"><svg viewBox="0 0 10 10" class="size-[10px]"><path d="M2 1v7.500h7M2 5.500h3v3" fill="none" stroke="#b5b5b5" /></svg></button>
                <button aria-label="극좌표" class="flex h-[13px] w-[14px] items-center justify-center"><svg viewBox="0 0 10 10" class="size-[10px]"><path d="M8 3.500A3.800 3.800 0 1 0 8.500 6M5 5h4.500M5 5l3-4M7.500 1v3h2" fill="none" stroke="#c4c4c4" /></svg></button>
                <button aria-label="객체 스냅" class="flex h-[13px] w-[14px] items-center justify-center bg-[#6b6b6b]"><svg viewBox="0 0 10 10" class="size-[10px]"><path d="M1.500 2h7v7h-7z" fill="none" stroke="#ccc" stroke-width="1.200" /><path d="M7.500 0H10v2.500H7.500z" fill="#4b93f0" /></svg></button>
                <button aria-label="추적" class="flex h-[13px] w-[14px] items-center justify-center"><svg viewBox="0 0 10 10" class="size-[10px]"><path d="M8.500 1.500 1.500 8.500H9" fill="none" stroke="#bbb" stroke-width="1.200" /></svg></button>
                <button aria-label="동적 UCS" class="flex h-[13px] w-[14px] items-center justify-center"><svg viewBox="0 0 10 10" class="size-[10px]"><path d="M1 3.500h4V1M5 1v5M4.500 6h3v3.500M5 5h4" fill="none" stroke="#d0d0d0" stroke-width="1.700" /></svg></button>
                <button aria-label="동적 입력" class="flex h-[13px] w-[14px] items-center justify-center bg-[#6b6b6b]"><svg viewBox="0 0 10 10" class="size-[10px]"><path d="M0 3h5M2.500.5v5" stroke="#c4c4c4" /><path d="M4 5h5.500v4.500H4z" fill="#a8a8a8" /><path d="M5 7.200h3.500" stroke="#666" /></svg></button>
                <button aria-label="선가중치" class="flex h-[13px] w-[14px] items-center justify-center"><svg viewBox="0 0 10 10" class="size-[10px]"><path d="M.5 1.500h9M.5 8.500h9" stroke="#d0d0d0" stroke-width="1.400" /><path d="M.5 4.800h9" stroke="#4d78b8" /></svg></button>
                <button aria-label="선택 순환" class="flex h-[13px] w-[14px] items-center justify-center"><svg viewBox="0 0 10 10" class="size-[10px]"><path d="M.5 1h9" stroke="#4b83d8" stroke-dasharray="1 1" /><path d="m4 2 5 5H7l1 2.300-1 .5-1-2.300L4.500 9z" fill="#ddd" /></svg></button>
                <button aria-label="도면층" class="flex h-[13px] w-[14px] items-center justify-center"><svg viewBox="0 0 12 12" class="size-[11px]"><use href="#layers" /><circle cx="10" cy="10" r="1.500" fill="#4b93f0" /></svg></button>
                <button aria-label="투명도" class="flex h-[13px] w-[14px] items-center justify-center bg-[#6b6b6b]"><svg viewBox="0 0 10 10" class="size-[10px]"><path d="M3 1h7v5H3z" fill="#8fbcf7" /><path d="M.5 4h7v5h-7z" fill="#4b93f0" /></svg></button>
                <button class="flex h-[13px] items-center gap-px"><svg viewBox="0 0 10 10" class="size-[10px]"><path d="M3.800.5h2.400L7 5.500l2.500 2.300v1.700L5 8 .5 9.500V7.800L3 5.500z" fill="#ccc" /></svg>1:1<svg class="h-1 w-[5px]"><use href="#caret" /></svg></button>
                <button aria-label="주석 가시성" class="ml-[2px] flex h-[13px] w-[14px] items-center justify-center"><svg viewBox="0 0 10 10" class="size-[10px]"><path d="M3.500 1h2L6.500 5.500 9 8v1.500L4.500 8 .5 9.500V8l2-2.500z" fill="#ccc" /><circle cx="8" cy="2" r="1.800" fill="#fbb040" /></svg></button>
                <button aria-label="자동 축척" class="flex h-[13px] w-[14px] items-center justify-center"><svg viewBox="0 0 10 10" class="size-[10px]"><path d="M3.500 1h2L6.500 5.500 9 8v1.500L4.500 8 .5 9.500V8l2-2.500z" fill="#777" /><path d="m9 .5-2 2.500h2L7.500 5" fill="none" stroke="#888" /></svg></button>
                <button aria-label="하드웨어 가속" class="flex h-[13px] w-[14px] items-center justify-center bg-[#6b6b6b]"><svg viewBox="0 0 10 10" class="size-[10px]" shape-rendering="crispEdges"><path d="M.5.500h9v9h-9z" fill="none" stroke="#ccc" /><path d="M2 2.500h6M2 4.500h6M2 6.500h6" stroke="#ccc" stroke-dasharray="1 1" /><path d="M3 3.500h6M3 5.500h6M3 7.500h6" stroke="#ccc" stroke-dasharray="1 1" /></svg></button>
                <button aria-label="객체 분리" class="flex h-[13px] w-[14px] items-center justify-center"><svg viewBox="0 0 10 10" class="size-[10px]"><path d="M2 1h6v8H2z" fill="#c4c4c4" /><path d="M2 2.800h6M4 4v4M6 4v4" stroke="#555" stroke-width=".8" /></svg></button>
                <button aria-label="새로 고침" class="flex h-[13px] w-[14px] items-center justify-center"><svg viewBox="0 0 10 10" class="size-[10px]"><path d="M8.500 2.500A4 4 0 1 0 9 6M6.500 4A2 2 0 1 0 6.500 6" fill="none" stroke="#bbb" /><path d="M9.500.5v3h-3z" fill="#bbb" /></svg></button>
            </div>
            <div class="ml-auto flex items-center gap-1">
                <button aria-label="설정"><svg viewBox="0 0 10 10" class="size-[10px]"><path d="M5 .8v8.400M.8 5h8.400M2 2l6 6m0-6L2 8" stroke="#d0d0d0" stroke-width="1.500" /><circle cx="5" cy="5" r="2.400" fill="#424242" stroke="#d0d0d0" stroke-width="1.600" /></svg></button>
                <button aria-label="잠금"><svg viewBox="0 0 10 10" class="size-[10px]"><path d="M1 4.500h6V9H1z" fill="#4b93f0" /><path d="M5.500 4.500V2h3v2.500" fill="none" stroke="#4b93f0" /></svg></button>
                <button aria-label="표시"><svg class="size-[10px]"><use href="#bulb" /></svg></button>
                <button aria-label="검색"><svg viewBox="0 0 10 10" class="size-[10px]"><path d="M.5 1.500h5V7h-5z" fill="#4b93f0" /><circle cx="6" cy="5.500" r="2.500" fill="#7b8fa8" stroke="#ccc" /><path d="m7.800 7.300 2 2" stroke="#ccc" stroke-width="1.300" /></svg></button>
                <button aria-label="전체 화면"><svg viewBox="0 0 10 10" class="size-[10px]"><path d="M1.500 1.500h7v7h-7z" fill="none" stroke="#999" /><path d="M5.500 1.500h3v3M4.500 8.500h-3v-3" fill="none" stroke="#ddd" stroke-width="1.200" /></svg></button>
                <span>GstarCAD</span>
                <svg viewBox="0 0 8 8" class="mt-1 size-2"><path d="M6 0h1.300v1.300H6zM3.500 3h1.300v1.300H3.500zM6 3h1.300v1.300H6zM1 6h1.300v1.300H1zM3.500 6h1.300v1.300H3.500zM6 6h1.300v1.300H6z" fill="#bbb" /></svg>
            </div>
        </footer>
    </div>

    <script>
        const sections = [
            ["일반", [["색", "ByLayer", "swatch"], ["도면층", "0"], ["선종류", "ByLayer", "long"], ["선종류 축척", "1"], ["선가중치", "ByLayer", "short"], ["투명도", "ByLayer"], ["두께", "0"]]],
            ["3D 시각화", [["재료", "ByLayer"], ["그림자 표시", "그림자 및 그림자 받기"]]],
            ["플롯 스타일", [["플롯 스타일", "ByColor"], ["플롯 스타일 테...", "없음"], ["플롯 테이블 부...", "모형"], ["플롯 테이블 유형", "사용않음"]]],
            ["보기", [["중심 X", "2630,0488"], ["중심 Y", "1271,8197"], ["중심 Z", "0"], ["높이", "1745,1102"], ["폭", "2760,3881"]]],
            ["기타", [["주석 축척", "1:1"], ["UCS 아이콘 켜기", "예"]]],
        ];

        const marks = {
            swatch: '<span class="size-[7px] bg-white"></span>',
            long: '<span class="ml-[2px] h-px w-10 bg-[#b0b0b0]"></span>',
            short: '<span class="h-px w-[26px] bg-[#b0b0b0]"></span>',
        };

        let html = "";
        sections.forEach(([title, rows]) => {
            html += `
                <h3 class="flex h-[13px] items-center justify-between bg-[#353537] pr-1 pl-[3px] text-[9px] leading-[13px]">${title}
                    <svg viewBox="0 0 5 3" class="h-[3px] w-[5px]"><path d="M0 3 2.500 0 5 3z" fill="#ddd" /></svg>
                </h3>
                <table class="mb-[2px] ml-[13px] w-[148px] table-fixed border-collapse border-l border-[#383838] bg-[#484848]">`;
            rows.forEach(([name, value, mark]) => {
                html += `
                    <tr class="h-[13px] border-b border-[#383838]">
                        <th class="w-[65px] overflow-hidden p-0 pl-[2px] text-left leading-[12px] font-normal whitespace-nowrap">${name}</th>
                        <td class="overflow-hidden border-l border-[#383838] p-0 pl-[2px] leading-[12px] whitespace-nowrap"><div class="flex items-center gap-px font-['Liberation_Sans','Noto_Sans_CJK_KR',sans-serif]">${mark ? marks[mark] : ""}${value}</div></td>
                    </tr>`;
            });
            html += "</table>";
        });
        document.getElementById("properties").innerHTML = html;

        // drawing grid, every fifth line is a major one
        const step = 9.64;
        let minor = "";
        let major = "";
        for (let i = 0; i < 300; i++) {
            const x = Math.round(i * step) - 0.5;
            const y = Math.round(i * step - 20) + 0.5;
            if (i % 5 === 0) major += `M${x} 0V3000M0 ${y}H3000`;
            else minor += `M${x} 0V3000M0 ${y}H3000`;
        }
        document.getElementById("minor").setAttribute("d", minor);
        document.getElementById("major").setAttribute("d", major);
    </script>
</body>

</html>
